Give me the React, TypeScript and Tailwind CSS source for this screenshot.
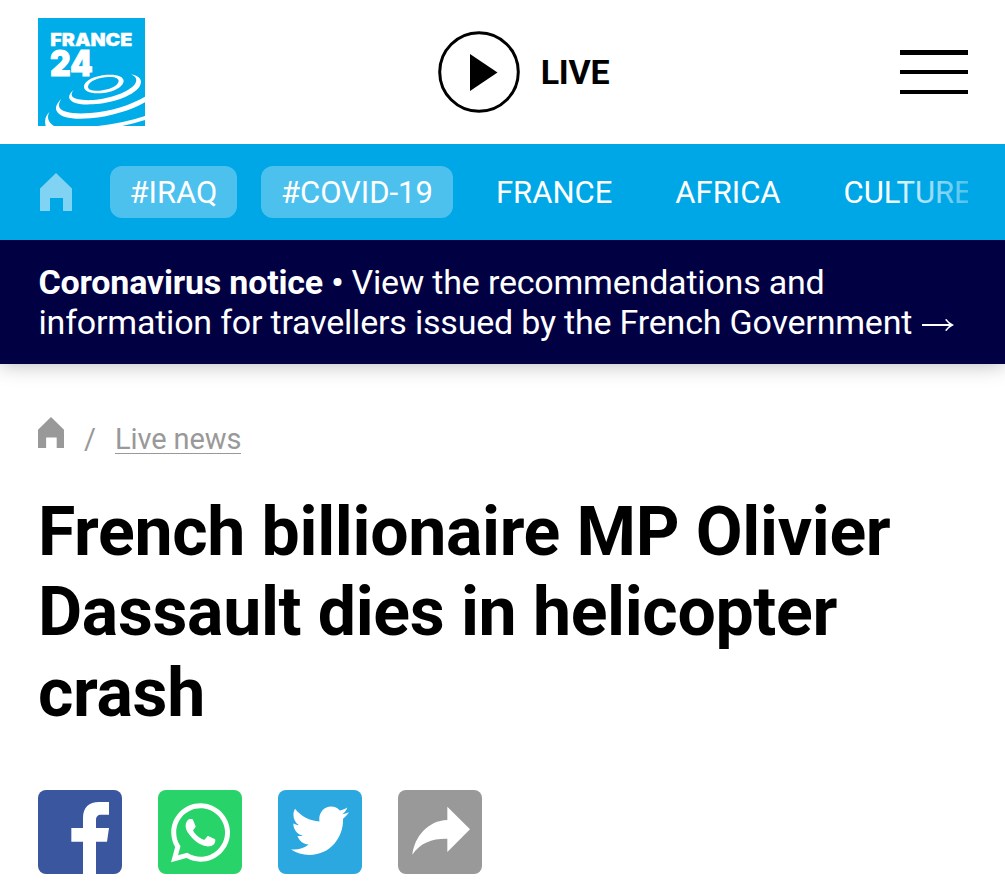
import React from 'react';
import {FaTwitter, FaWhatsapp} from "react-icons/fa";

const tags = ["#IRAQ", "#COVID-19"];

const Logo = () => (
    <svg viewBox="24 24 321 324" className="h-[108px] w-[107px] shrink-0">
        <rect x="24" y="24" width="321" height="324" fill="#00ade9" />
        <g fill="#fff" stroke="#fff" fontFamily="Inter, sans-serif" fontWeight="900">
            <text x="61" y="107" fontSize="54" strokeWidth="1" textLength="246" lengthAdjust="spacingAndGlyphs">FRANCE</text>
            <text x="60" y="197" fontSize="105" strokeWidth="3" textLength="128" lengthAdjust="spacingAndGlyphs">24</text>
        </g>
        <g fill="#fff">
            <path fillRule="evenodd" d="M162 229C164 208 204 195 236 194C263 193 281 200 281 213C279 234 242 249 208 250C180 251 161 244 162 229ZM174 230C175 212 210 202 236 201C257 200 267 206 266 214C264 229 236 240 208 242C186 243 174 239 174 230Z" />
            <path d="M132 239C119 249 115 259 119 267C127 281 154 285 188 283C244 280 306 260 328 231C340 212 330 198 303 193C319 200 323 210 315 222C297 246 241 266 189 270C156 272 131 267 126 258C123 252 126 245 132 239Z" />
            <path d="M94 266C80 280 75 292 80 303C91 324 130 329 181 325C243 320 302 301 345 277V260C302 285 242 304 181 309C129 313 96 307 88 292C85 284 88 275 94 266Z" />
            <path d="M58 306C47 317 43 330 47 348H72C54 337 50 322 58 306Z" />
            <path d="M204 348C255 342 303 332 345 318V330C323 337 300 343 277 348Z" />
        </g>
    </svg>
);

const HomeIcon = ({className}: {className: string}) => (
    <svg viewBox="0 0 32 38" preserveAspectRatio="none" className={className} fill="currentColor">
        <path d="M16 0L32 15.5V38H23V25H10V38H0V15.5Z" />
    </svg>
);

const ArrowIcon = () => (
    <svg viewBox="0 0 32 12" className="mb-[3px] ml-[2px] inline h-3 w-8 align-baseline" fill="currentColor">
        <path d="M0 5H27L23 0.8L24.6 0C26.5 2.7 29 4.6 32 6C29 7.4 26.5 9.3 24.6 12L23 11.2L27 7H0Z" />
    </svg>
);

const Header = () => (
    <header className="flex h-36 items-center justify-between pr-[37px] pl-[38px]">
        <Logo />
        <div className="flex items-center gap-[21px] pl-[2px]">
            <svg viewBox="0 0 82 82" className="size-[82px]">
                <circle cx="41" cy="41" r="39.3" fill="none" stroke="#000" strokeWidth="3" />
                <path d="M32 23L59.5 41.5L32 60Z" />
            </svg>
            <span className="text-[34px] leading-none font-bold tracking-[-0.3px]">LIVE</span>
        </div>
        <div className="flex w-[68px] flex-col gap-4">
            <span className="-mt-px h-[5px] bg-black" />
            <span className="-mt-px h-1 bg-black" />
            <span className="h-1 bg-black" />
        </div>
    </header>
);

const Navbar = () => (
    <nav className="relative flex h-24 items-center bg-[#00a7e7] pr-[37px] pl-[40px] text-[31px] text-white">
        <div className="flex flex-1 items-center overflow-hidden whitespace-nowrap">
            <HomeIcon className="h-[38px] w-8 shrink-0 text-[#80d3f3]" />
            <div className="ml-[38px] flex gap-6">
                {tags.map((tag) => (
                    <a key={tag} className="h-[52px] rounded-xl bg-[#4dc1ee] pr-5 pl-[19.5px] leading-[54px] tracking-[-0.02px]">{tag}</a>
                ))}
            </div>
            <div className="ml-[43px] flex w-0 gap-[63px] pt-[2px] leading-[54px]">
                <a>FRANCE</a>
                <a>AFRICA</a>
                <a>CULTURE</a>
            </div>
        </div>
        {/* fades out the links that scroll off the edge */}
        <div className="absolute inset-y-0 right-0 w-[120px] bg-linear-to-r from-[#00a7e7]/0 to-[#00a7e7]" />
    </nav>
);

const Share = () => (
    <div className="flex gap-9 pt-[57px]">
        <div className="size-[84px] overflow-hidden rounded-lg bg-[#3a569f]">
            <svg viewBox="0 0 252 252" fill="#fff">
                <path d="M135 252V155H100V114H135V84C135 52 153 36 183 36H213V74H190C179 74 174 80 174 90V114H213L207 155H174V252Z" />
            </svg>
        </div>
        <div className="flex size-[84px] items-center justify-center rounded-lg bg-[#28d469] text-white">
            <FaWhatsapp className="h-[67.4px] w-[59px]" />
        </div>
        <div className="flex size-[84px] items-center justify-center rounded-lg bg-[#2ba8e0] pb-[2px] text-white">
            <FaTwitter preserveAspectRatio="none" className="h-[59.5px] w-[58px]" />
        </div>
        <div className="size-[84px] rounded-lg bg-[#999]">
            <svg viewBox="0 0 252 252" fill="#fff">
                <path d="M148 50L216 118L148 186V146C104 145 66 158 43 194C50 139 90 92 148 90Z" />
            </svg>
        </div>
    </div>
);

export default function App() {
    return (
        <div className="h-[895px] overflow-hidden bg-white font-[Roboto,sans-serif] text-black">
            <Header />
            <Navbar />
            <p className="h-[124px] bg-[#000042] pt-[22px] pl-[38.5px] text-[34px] leading-10 tracking-[-0.2px] text-white shadow-[0_0_20px_rgba(0,0,0,0.3)]">
                <b>Coronavirus notice •</b> View the recommendations and
                <br />
                information for travellers issued by the French Government{" "}
                <ArrowIcon />
            </p>
            <main className="px-[38px] pt-[53px]">
                <div className="flex h-[42px] items-start text-[29px] leading-[44px] text-[#999]">
                    <HomeIcon className="h-[31px] w-[26px]" />
                    <span className="ml-5">/</span>
                    <a className="mt-[6px] ml-[19px] h-[31px] border-b border-[#999] leading-8 tracking-[-0.1px]">Live news</a>
                </div>
                <h1 className="mt-[33px] text-[68px] leading-[80.4px] font-bold tracking-[-0.34px]">
                    French billionaire MP Olivier Dassault dies in helicopter crash
                </h1>
                <Share />
            </main>
        </div>
    );
}
